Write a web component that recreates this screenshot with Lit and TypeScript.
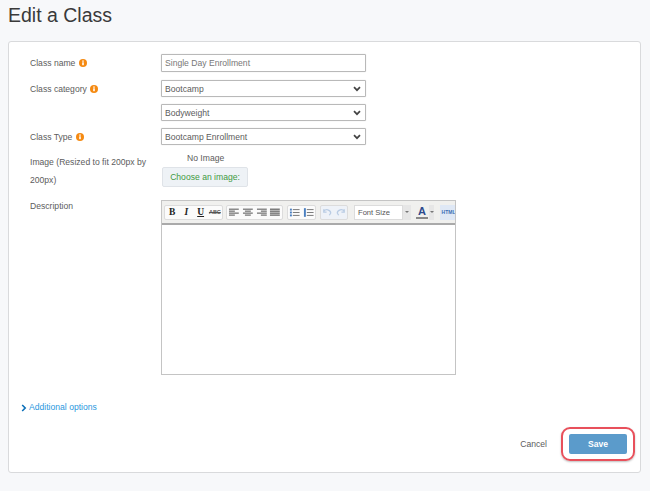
import { LitElement, html, css, svg } from "lit";
import { customElement } from "lit/decorators.js";

const chevron = html`<svg class="chev" width="8" height="6" viewBox="0 0 8 6"><path d="M1 1.2 L4 4.2 L7 1.2" fill="none" stroke="#444" stroke-width="1.7"/></svg>`;
const info = html`<svg class="info" width="8" height="8" viewBox="0 0 8 8"><circle cx="4" cy="4" r="4" fill="#f58a12"/><rect x="3.2" y="3.3" width="1.6" height="2.9" fill="#fff"/><rect x="3.2" y="1.5" width="1.6" height="1.2" fill="#fff"/></svg>`;

const g = (c: any) => html`<svg width="14" height="13" viewBox="0 0 14 13">${c}</svg>`;
const lines = (rows: [number, number][], color = "#777") => g(rows.map(([x, w], i) =>
  svg`<rect x="${x}" y="${2.5 + i * 2}" width="${w}" height="1.3" fill="${color}"/>`
));

@customElement("app-root")
export class AppRoot extends LitElement {
  static styles = css`
    :host { display: block; width: 650px; height: 491px; background: #f7f8fa; font-family: "Liberation Sans", Arial, sans-serif; font-size: 8.6px; color: #5c5c5c; overflow: hidden; box-sizing: border-box; padding: 0 9px 0 8px; }
    h1 { margin: 0; padding-top: 3px; height: 41px; box-sizing: border-box; font-size: 19.5px; line-height: 24px; font-weight: 400; color: #3a3a3a; }
    .card { position: relative; height: 432px; box-sizing: border-box; background: #fff; border: 1px solid #d9dadc; border-radius: 3px; padding: 12px 0 0 21px; }
    .row { display: grid; grid-template-columns: 131px 205px; align-items: start; }
    .label { line-height: 18px; }
    .info { vertical-align: -1px; margin-left: 1px; }
    .field { position: relative; box-sizing: border-box; width: 205px; background: #fff; border: 1px solid #b9b9b9; box-shadow: 0 0 1px #ccc; border-radius: 1px; padding-left: 3px; display: flex; align-items: center; }
    .r1 { height: 18px; margin-bottom: 8px; color: #777; }
    .r2 { height: 17px; margin-bottom: 7px; }
    .r3 { height: 17px; margin-bottom: 7px; }
    .r4 { height: 17px; margin-bottom: 7px; }
    .chev { position: absolute; right: 4px; top: 5px; }
    .img-label { line-height: 18px; padding-top: 1px; width: 125px; }
    .img-side { padding-left: 1px; }
    .noimg { padding-left: 25px; line-height: 13px; margin-bottom: 2px; }
    .choose { width: 86px; height: 20px; box-sizing: border-box; background: #eef2f6; border: 1px solid #dfe3e8; border-radius: 2px; color: #3f9a3f; display: flex; align-items: center; justify-content: center; }
    .desc { margin-top: 11px; display: grid; grid-template-columns: 131px auto; }
    .desc-label { line-height: 13px; }
    .editor { width: 295px; height: 175px; box-sizing: border-box; border: 1px solid #c4c4c4; background: #fff; }
    .toolbar { height: 24px; box-sizing: border-box; background: #f0f0ee; border-bottom: 2px solid #aaa; display: flex; align-items: center; padding-left: 2px; overflow: hidden; }
    .grp { display: flex; height: 15px; align-items: center; justify-content: space-around; box-sizing: border-box; background: #fbfbfb; border: 1px solid #dcdcdc; border-radius: 2px; flex: none; }
    .g1 { width: 59px; margin-right: 3px; }
    .g2 { width: 57px; margin-right: 4px; }
    .g3 { width: 29px; margin-right: 4px; }
    .g4 { width: 28px; margin-right: 6px; background: #eef2f8; }
    .b { width: 14px; text-align: center; font-family: "Liberation Serif", serif; font-size: 9.5px; font-weight: 700; color: #222; line-height: 13px; }
    .abc { font-size: 5.5px; text-decoration: line-through; font-family: "Liberation Sans", sans-serif; color: #555; }
    .i { font-style: italic; }
    .u { text-decoration: underline; }
    .sel { width: 49px; height: 15px; flex: none; box-sizing: border-box; background: #fff; border: 1px solid #dcdcdc; padding-left: 3px; line-height: 14px; font-size: 7.6px; color: #555; }
    .drop { width: 8px; height: 15px; flex: none; background: #e6e6e6; display: flex; align-items: center; justify-content: center; }
    .d1 { margin-right: 4px; }
    .d2 { width: 5px; margin-right: 5px; }
    .tri { width: 0; height: 0; border: 2px solid transparent; border-top: 2px solid #777; margin-top: 2px; }
    .a { width: 14px; height: 15px; flex: none; display: flex; flex-direction: column; align-items: center; font-size: 11px; font-weight: 700; color: #2c4a8c; line-height: 12px; }
    .a i { display: block; width: 12px; height: 2px; background: #888; }
    .html { width: 17px; flex: none; margin-left: 1px; font-size: 5px; font-weight: 700; color: #3a6fb5; text-align: center; line-height: 15px; background: #dfe8f5; }
    .more { position: absolute; left: 12px; top: 359px; color: #2a98de; line-height: 13px; display: flex; align-items: center; gap: 2px; }
    .footer { position: absolute; right: 13px; bottom: 18px; display: flex; align-items: center; gap: 22px; }
    .save { position: relative; width: 58px; height: 20px; background: #5b9bcb; color: #fff; border-radius: 2px; display: flex; align-items: center; justify-content: center; font-weight: 700; }
    .ring { position: absolute; left: -8px; top: -7px; width: 74px; height: 34px; box-sizing: border-box; border: 2px solid #e8505b; border-radius: 9px; box-shadow: 0 1px 2px rgba(0,0,0,.25); }
  `;

  render() {
    return html`
      <h1>Edit a Class</h1>
      <div class="card">
        <div class="row"><div class="label">Class name ${info}</div><div class="field r1">Single Day Enrollment</div></div>
        <div class="row"><div class="label">Class category ${info}</div><div class="field r2">Bootcamp${chevron}</div></div>
        <div class="row"><div></div><div class="field r3">Bodyweight${chevron}</div></div>
        <div class="row"><div class="label">Class Type ${info}</div><div class="field r4">Bootcamp Enrollment${chevron}</div></div>
        <div class="row">
          <div class="img-label">Image (Resized to fit 200px by 200px)</div>
          <div class="img-side"><div class="noimg">No Image</div><div class="choose">Choose an image:</div></div>
        </div>
        <div class="desc">
          <div class="desc-label">Description</div>
          <div class="editor">
            <div class="toolbar">
              <div class="grp g1"><span class="b">B</span><span class="b i">I</span><span class="b u">U</span><span class="b abc">ABC</span></div>
              <div class="grp g2">${lines([[2, 10], [2, 6], [2, 10], [2, 6]])}${lines([[2, 10], [4, 6], [2, 10], [4, 6]])}${lines([[2, 10], [6, 6], [2, 10], [6, 6]])}${lines([[2, 10], [2, 10], [2, 10], [2, 10]], "#666")}</div>
              <div class="grp g3">${g(svg`<g fill="#4a7fc0"><rect x="2" y="2.5" width="2" height="2"/><rect x="2" y="5.5" width="2" height="2"/><rect x="2" y="8.5" width="2" height="2"/></g><g fill="#777"><rect x="5" y="3" width="7" height="1"/><rect x="5" y="6" width="7" height="1"/><rect x="5" y="9" width="7" height="1"/></g>`)}${g(svg`<g fill="#4a7fc0"><rect x="2" y="2" width="2" height="9"/></g><g fill="#777"><rect x="5" y="3" width="7" height="1"/><rect x="5" y="6" width="7" height="1"/><rect x="5" y="9" width="7" height="1"/></g>`)}</div>
              <div class="grp g4">${g(svg`<path d="M3 5 C5 2.5 10 3 10.5 7 L9 9.5 M3 3 L3 6 L6 6" fill="none" stroke="#b9cce4" stroke-width="1.4"/>`)}${g(svg`<path d="M11 5 C9 2.5 4 3 3.5 7 L5 9.5 M11 3 L11 6 L8 6" fill="none" stroke="#b9cce4" stroke-width="1.4"/>`)}</div>
              <div class="sel">Font Size</div><div class="drop d1"><div class="tri"></div></div>
              <div class="a">A<i></i></div><div class="drop d2"><div class="tri"></div></div>
              <div class="html">HTML</div>
            </div>
          </div>
        </div>
        <div class="more"><svg width="6" height="8" viewBox="0 0 6 8"><path d="M1.2 1 L4.2 4 L1.2 7" fill="none" stroke="#0b6fb8" stroke-width="1.6"/></svg>Additional options</div>
        <div class="footer"><span>Cancel</span><div class="save">Save<div class="ring"></div></div></div>
      </div>
    `;
  }
}
